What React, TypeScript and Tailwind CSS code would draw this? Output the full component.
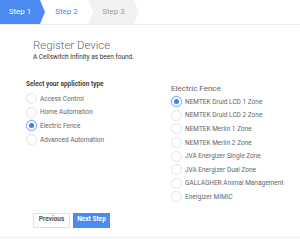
import { useState } from "react";

const appTypes = ["Access Control", "Home Automation", "Electric Fence", "Advanced Automation"];

const fenceModels = [
  "NEMTEK Druid LCD 1 Zone",
  "NEMTEK Druid LCD 2 Zone",
  "NEMTEK Merlin 1 Zone",
  "NEMTEK Merlin 2 Zone",
  "JVA Energizer Single Zone",
  "JVA Energizer Dual Zone",
  "GALLAGHER Animal Management",
  "Energizer MIMIC",
];

function Radio({ checked }: { checked: boolean }) {
  return (
    <span
      className={`w-[11px] h-[11px] rounded-full border shrink-0 flex items-center justify-center ${
        checked ? "border-[#7aa7f5] shadow-[0_0_0_1px_rgba(75,138,240,0.15)]" : "border-[#e3e3e3]"
      }`}
    >
      {checked && <span className="w-[5px] h-[5px] rounded-full bg-[#3d80f0]" />}
    </span>
  );
}

function RadioRow({ label, checked, onClick }: { label: string; checked: boolean; onClick: () => void }) {
  return (
    <button onClick={onClick} className="flex items-center gap-[3px] h-[13.6px] text-left">
      <Radio checked={checked} />
      <span className="text-[6.5px] leading-[8px] text-[#666]">{label}</span>
    </button>
  );
}

export default function App() {
  const [appType, setAppType] = useState("Electric Fence");
  const [model, setModel] = useState(fenceModels[0]);

  return (
    <div className="w-[300px] h-[238px] bg-white border-b border-[#ececec] font-['Roboto',sans-serif] overflow-hidden">
      {/* Steps */}
      <div className="flex h-[25px] border-b border-[#eeeeee]">
        <div className="w-[45px] h-[24px] bg-[#4b8af0] text-white flex items-center justify-center pr-[5px] text-[8px] [clip-path:polygon(0_0,40px_0,45px_50%,40px_100%,0_100%)] relative z-30">
          Step 1
        </div>
        <div className="w-[53px] h-[24px] -ml-[5px] bg-white text-[#4b8af0] flex items-center justify-center pl-[5px] pr-[5px] text-[8px] [clip-path:polygon(0_0,48px_0,53px_50%,48px_100%,0_100%,5px_50%)] relative z-20">
          Step 2
        </div>
        <div className="w-[51px] h-[24px] -ml-[5px] bg-[#f2f2f2] text-[#9e9e9e] flex items-center justify-center pl-[5px] pr-[5px] text-[8px] [clip-path:polygon(0_0,46px_0,51px_50%,46px_100%,0_100%,5px_50%)] relative z-10">
          Step 3
        </div>
      </div>

      {/* Heading */}
      <div className="ml-[33px] mt-[14px]">
        <h1 className="text-[11.4px] leading-[13px] font-light text-[#666]">Register Device</h1>
        <p className="mt-[1px] text-[6.5px] leading-[8px] text-[#333]">A Cellswitch Infinity as been found.</p>
      </div>

      {/* Columns */}
      <div className="flex items-start">
        <div className="ml-[26px] w-[145px] mt-[19px]">
          <p className="text-[6.5px] leading-[8px] font-bold text-[#444]">Select your appliction type</p>
          <div className="mt-[4px] flex flex-col">
            {appTypes.map((t) => (
              <RadioRow key={t} label={t} checked={appType === t} onClick={() => setAppType(t)} />
            ))}
          </div>
        </div>
        <div className="mt-[23px]">
          <p className="text-[8px] leading-[10px] text-[#666]">Electric Fence</p>
          <div className="mt-[1px] flex flex-col">
            {fenceModels.map((m) => (
              <RadioRow key={m} label={m} checked={model === m} onClick={() => setModel(m)} />
            ))}
          </div>
        </div>
      </div>

      {/* Actions */}
      <div className="flex gap-[3px] ml-[33px] mt-[9px]">
        <button className="w-[37px] h-[15px] border border-[#e0e0e0] bg-white text-[6.5px] font-bold text-[#555]">
          Previous
        </button>
        <button className="w-[37px] h-[15px] bg-[#4b8af0] text-[6.5px] font-bold text-white">Next Step</button>
      </div>
    </div>
  );
}
